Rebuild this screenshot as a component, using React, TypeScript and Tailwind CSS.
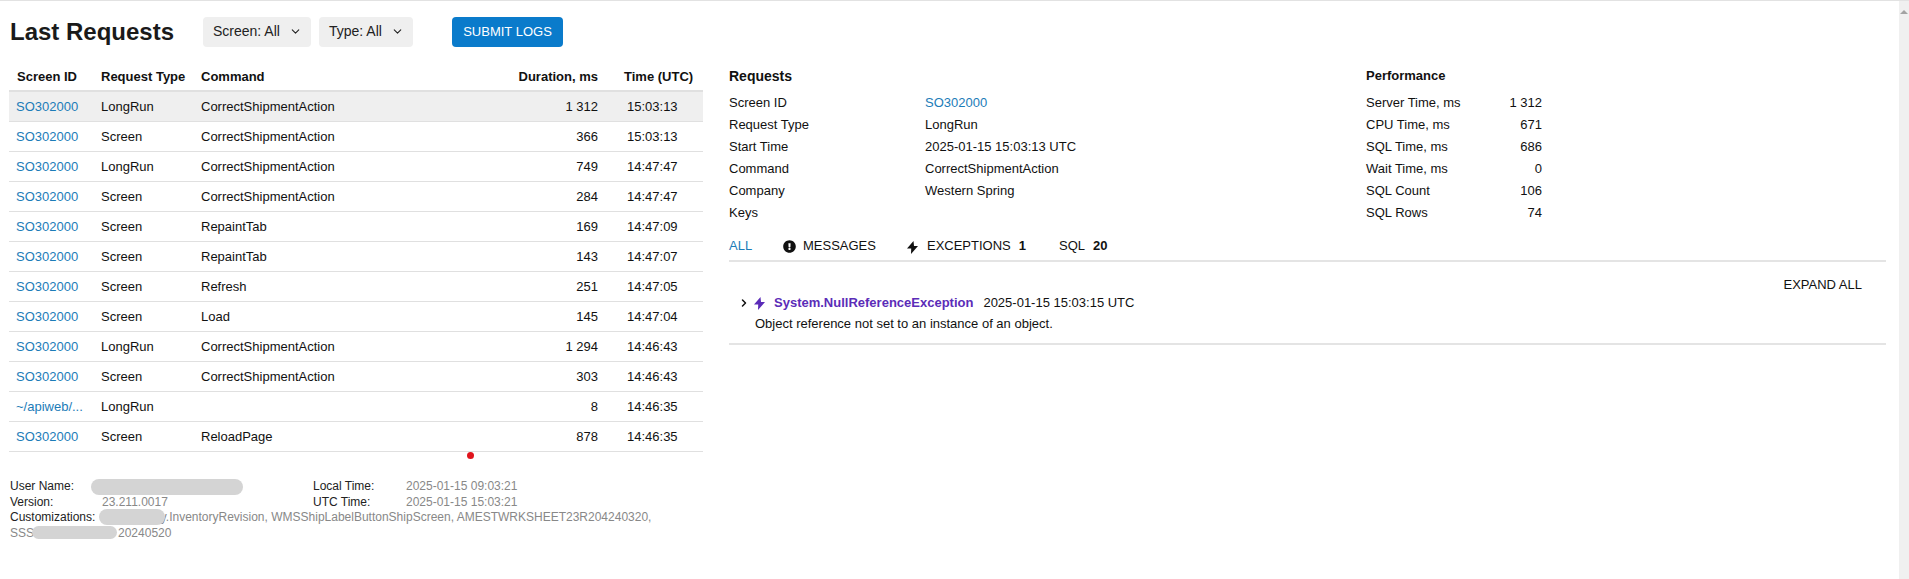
import { ChevronDown, ChevronRight } from "lucide-react";
import { FaExclamationCircle } from "react-icons/fa";

const requests = [
  { id: "SO302000", type: "LongRun", command: "CorrectShipmentAction", duration: "1 312", time: "15:03:13" },
  { id: "SO302000", type: "Screen", command: "CorrectShipmentAction", duration: "366", time: "15:03:13" },
  { id: "SO302000", type: "LongRun", command: "CorrectShipmentAction", duration: "749", time: "14:47:47" },
  { id: "SO302000", type: "Screen", command: "CorrectShipmentAction", duration: "284", time: "14:47:47" },
  { id: "SO302000", type: "Screen", command: "RepaintTab", duration: "169", time: "14:47:09" },
  { id: "SO302000", type: "Screen", command: "RepaintTab", duration: "143", time: "14:47:07" },
  { id: "SO302000", type: "Screen", command: "Refresh", duration: "251", time: "14:47:05" },
  { id: "SO302000", type: "Screen", command: "Load", duration: "145", time: "14:47:04" },
  { id: "SO302000", type: "LongRun", command: "CorrectShipmentAction", duration: "1 294", time: "14:46:43" },
  { id: "SO302000", type: "Screen", command: "CorrectShipmentAction", duration: "303", time: "14:46:43" },
  { id: "~/apiweb/...", type: "LongRun", command: "", duration: "8", time: "14:46:35" },
  { id: "SO302000", type: "Screen", command: "ReloadPage", duration: "878", time: "14:46:35" },
];

const details = [
  ["Screen ID", "SO302000"],
  ["Request Type", "LongRun"],
  ["Start Time", "2025-01-15 15:03:13 UTC"],
  ["Command", "CorrectShipmentAction"],
  ["Company", "Western Spring"],
  ["Keys", ""],
];

const performance = [
  ["Server Time, ms", "1 312"],
  ["CPU Time, ms", "671"],
  ["SQL Time, ms", "686"],
  ["Wait Time, ms", "0"],
  ["SQL Count", "106"],
  ["SQL Rows", "74"],
];

function Bolt({ className }: { className: string }) {
  return (
    <svg viewBox="0 0 11 13" className={className} fill="currentColor">
      <path d="M6.5 0 0 7.5h4.2L4 13l7-8H7z" />
    </svg>
  );
}

function Filter({ label, width }: { label: string; width: string }) {
  return (
    <div className={`flex h-[30px] items-center justify-between rounded-[4px] bg-[#efefef] pl-[10px] pr-[9px] text-[14px] text-[#222] ${width}`}>
      <span>{label}</span>
      <ChevronDown className="h-[13px] w-[13px]" strokeWidth={2} />
    </div>
  );
}

export default function App() {
  return (
    <div className="flex h-[579px] overflow-hidden border-t border-[#e2e2e2] bg-white font-['Liberation_Sans',Arial,sans-serif] text-[13px] text-[#111]">
      <div className="min-w-0 flex-1">
        <div className="flex h-[60px] items-center pl-[10px] pt-[1px]">
          <h1 className="w-[193px] text-[24px] font-bold leading-none text-[#1a1a1a]">Last Requests</h1>
          <div className="flex gap-[8px]">
            <Filter label="Screen: All" width="w-[108px]" />
            <Filter label="Type: All" width="w-[94px]" />
          </div>
          <button className="ml-[39px] h-[30px] w-[111px] rounded-[4px] bg-[#0a7bcb] text-[13px] text-white">SUBMIT LOGS</button>
        </div>

        <div className="flex">
          <div className="ml-[9px] w-[694px] shrink-0">
            <div className="grid h-[31px] grid-cols-[92px_100px_1fr_105px] items-center border-b-2 border-[#e0e0e0] pt-[3px] font-bold">
              <div className="pl-[8px]">Screen ID</div>
              <div>Request Type</div>
              <div className="flex justify-between">
                <span>Command</span>
                <span>Duration, ms</span>
              </div>
              <div className="pl-[26px]">Time (UTC)</div>
            </div>
            {requests.map((r, i) => (
              <div
                key={i}
                className={`grid h-[30px] grid-cols-[92px_100px_1fr_105px] items-center border-b border-[#e0e0e0] ${i === 0 ? "bg-[#efefef]" : ""}`}
              >
                <div className="pl-[7px] text-[#1c7cb8]">{r.id}</div>
                <div>{r.type}</div>
                <div className="flex justify-between">
                  <span>{r.command}</span>
                  <span>{r.duration}</span>
                </div>
                <div className="pl-[29px]">{r.time}</div>
              </div>
            ))}
            <div className="relative">
              <div className="absolute left-[458px] top-0 h-[7px] w-[7px] rounded-full bg-[#e0141c]" />
            </div>
          </div>

          <div className="ml-[26px] min-w-0 flex-1 pr-[13px]">
            <div className="flex pt-[6px]">
              <div className="w-[637px] shrink-0">
                <h2 className="mb-[7px] h-[18px] text-[14px] font-bold leading-[18px]">Requests</h2>
                {details.map(([label, value]) => (
                  <div key={label} className="flex h-[22px] items-center">
                    <div className="w-[196px]">{label}</div>
                    <div className={label === "Screen ID" ? "text-[#1c7cb8]" : ""}>{value}</div>
                  </div>
                ))}
              </div>
              <div className="w-[176px]">
                <h2 className="mb-[7px] h-[18px] text-[13px] font-bold leading-[18px]">Performance</h2>
                {performance.map(([label, value]) => (
                  <div key={label} className="flex h-[22px] items-center justify-between">
                    <div>{label}</div>
                    <div>{value}</div>
                  </div>
                ))}
              </div>
            </div>

            <div className="mt-[12px] flex h-[26px] items-start border-b-2 border-[#e4e4e4] leading-[20px]">
              <span className="w-[23px] text-[#1c7cb8]">ALL</span>
              <span className="ml-[31px] flex items-center">
                <FaExclamationCircle className="mr-[7px] h-[13px] w-[13px]" />
                MESSAGES
              </span>
              <span className="ml-[31px] flex items-center">
                <Bolt className="mr-[9px] mt-[2px] h-[13px] w-[11px]" />
                EXCEPTIONS
                <b className="ml-[8px]">1</b>
              </span>
              <span className="ml-[33px] flex items-center">
                SQL
                <b className="ml-[8px]">20</b>
              </span>
            </div>

            <div className="h-[83px] border-b-2 border-[#e4e4e4]">
              <div className="flex justify-end pr-[24px] pt-[15px] leading-[16px]">EXPAND ALL</div>
              <div className="flex h-[19px] items-center pl-[9px]">
                <ChevronRight className="h-[12px] w-[12px]" strokeWidth={3} />
                <Bolt className="ml-[4px] mt-[1px] h-[13px] w-[11px] text-[#5b2cb8]" />
                <span className="ml-[9px] font-bold text-[#5b2cb8]">System.NullReferenceException</span>
                <span className="ml-[10px]">2025-01-15 15:03:15 UTC</span>
              </div>
              <div className="h-[20px] pl-[26px] leading-[23px]">Object reference not set to an instance of an object.</div>
            </div>
          </div>
        </div>

        <div className="relative ml-[10px] mt-[27px] w-[660px] text-[12px] leading-[15.5px] text-[#888]">
          <div className="flex">
            <span className="w-[92px] text-[#222]">User Name:</span>
            <span className="w-[211px]"></span>
            <span className="w-[93px] text-[#222]">Local Time:</span>
            <span>2025-01-15 09:03:21</span>
          </div>
          <div className="flex">
            <span className="w-[92px] text-[#222]">Version:</span>
            <span className="w-[211px]">23.211.0017</span>
            <span className="w-[93px] text-[#222]">UTC Time:</span>
            <span>2025-01-15 15:03:21</span>
          </div>
          <div>
            <span className="text-[#222]">Customizations:</span> <span className="inline-block w-[62px]"></span>y.InventoryRevision, WMSShipLabelButtonShipScreen, AMESTWRKSHEET23R204240320, SSS<span className="inline-block w-[84px]"></span>20240520
          </div>
          <div className="absolute left-[81px] top-0 h-[16px] w-[152px] rounded-full bg-[#d4d4d4]" />
          <div className="absolute left-[89px] top-[30px] h-[16px] w-[66px] rounded-full bg-[#d4d4d4]" />
          <div className="absolute left-[22px] top-[47px] h-[13px] w-[85px] rounded-full bg-[#d4d4d4]" />
        </div>
      </div>

      <div className="w-[10px] shrink-0 bg-[#f0f0f0] pt-[9px]">
        <div className="mx-auto h-0 w-0 border-x-[4px] border-b-[4px] border-x-transparent border-b-[#a3a3a3]" />
      </div>
    </div>
  );
}
